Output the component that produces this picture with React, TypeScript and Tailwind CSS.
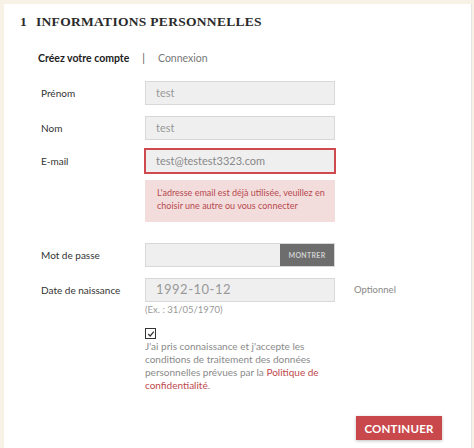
export default function App() {
  const sans = { fontFamily: "Lato, 'Open Sans', sans-serif" };
  return (
    <div className="w-[474px] h-[448px] bg-[#f7f1e6] pl-[4px] pt-[4px] overflow-hidden" style={sans}>
      <div className="w-[468px] h-[460px] bg-white border-r border-[#e4e4e4]">
        {/* Section title */}
        <h1
          className="pt-[8px] pl-[16px] text-[13.5px] font-bold text-[#2a2a2a] tracking-[0.3px] flex"
          style={{ fontFamily: "'Liberation Serif', serif" }}
        >
          <span className="w-[16px]">1</span>
          <span>INFORMATIONS PERSONNELLES</span>
        </h1>

        {/* Tabs */}
        <div className="mt-[19px] ml-[34px] flex items-center text-[10.5px]">
          <span className="font-bold text-[#222]">Créez votre compte</span>
          <span className="mx-[13px] text-[#555]">|</span>
          <span className="text-[#777]">Connexion</span>
        </div>

        {/* Form */}
        <div className="mt-[14px] flex flex-col text-[10px] text-[#333]">
          <Row label="Prénom">
            <Field value="test" />
          </Row>
          <Row label="Nom" className="mt-[11px]">
            <Field value="test" />
          </Row>
          <Row label="E-mail" className="mt-[8px]">
            <div className="w-[192px] h-[26px] -ml-[1px] border-2 border-[#cf4a4f] bg-[#efefef] flex items-center pl-[10px] text-[11px] text-[#888]">
              test@testest3323.com
            </div>
          </Row>
          <div className="ml-[141px] mt-[6px] w-[190px] h-[42px] bg-[#f3dcdc] pl-[12px] pr-[2px] pt-[6px] text-[9px] leading-[13px] text-[#b64a4f]">
            L'adresse email est déjà utilisée, veuillez en choisir une autre ou vous connecter
          </div>

          <Row label="Mot de passe" className="mt-[21px]">
            <div className="w-[190px] h-[24px] flex border border-[#d8d8d8]">
              <div className="flex-1 bg-[#efefef]" />
              <div className="w-[54px] bg-[#6d6d6d] flex items-center justify-center text-[7px] font-bold text-[#cfcfcf] tracking-[0.3px]">
                MONTRER
              </div>
            </div>
          </Row>

          <Row label="Date de naissance" className="mt-[11px]">
            <div className="flex items-center">
              <div className="w-[190px] h-[24px] border border-[#d8d8d8] bg-[#efefef] flex items-center pl-[10px] text-[13px] text-[#999] tracking-[0.5px]">
                1992-10-12
              </div>
              <span className="ml-[19px] text-[9.5px] text-[#888]">Optionnel</span>
            </div>
          </Row>
          <div className="ml-[141px] mt-[1px] text-[9.5px] text-[#999]">(Ex. : 31/05/1970)</div>

          {/* Consent */}
          <div className="ml-[141px] mt-[11px] w-[190px]">
            <div className="w-[11px] h-[11px] border-[1.5px] border-[#333] flex items-center justify-center">
              <svg viewBox="0 0 10 10" className="w-[8px] h-[8px]">
                <path d="M1.5 5 L4 7.5 L8.5 2" fill="none" stroke="#333" strokeWidth="1.5" />
              </svg>
            </div>
            <p className="mt-[1px] text-[10px] leading-[13px] text-[#8a8a8a]">
              J'ai pris connaissance et j'accepte les conditions de traitement des données personnelles prévues par la{" "}
              <span className="text-[#c0474c]">Politique de</span>{" "}
              <span className="text-[#c0474c]">confidentialité</span>.
            </p>
          </div>

          <div className="flex justify-end pr-[29px] mt-[24px]">
            <button className="w-[86px] h-[24px] bg-[#c9484c] text-white text-[11.5px] font-bold tracking-[0.2px] shadow-[0_1px_3px_rgba(0,0,0,0.25)]">
              CONTINUER
            </button>
          </div>
        </div>
      </div>
    </div>
  );
}

function Row({ label, children, className = "" }: { label: string; children: React.ReactNode; className?: string }) {
  return (
    <div className={`flex items-center ${className}`}>
      <div className="w-[141px] pl-[37px] text-[10px] text-[#333]">{label}</div>
      {children}
    </div>
  );
}

function Field({ value }: { value: string }) {
  return (
    <div className="w-[190px] h-[24px] border border-[#d8d8d8] bg-[#efefef] flex items-center pl-[10px] text-[11px] text-[#999]">
      {value}
    </div>
  );
}
